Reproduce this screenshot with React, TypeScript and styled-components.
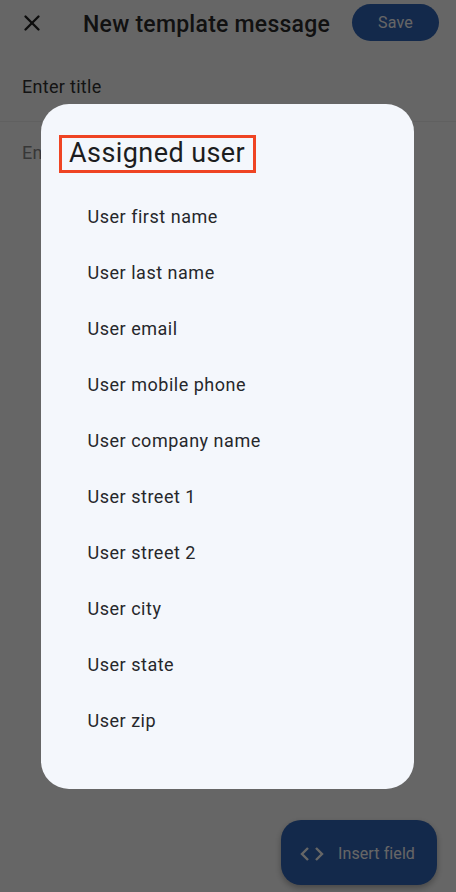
import React from 'react';
import styled, { createGlobalStyle } from 'styled-components';
import { X } from 'lucide-react';

const GlobalStyle = createGlobalStyle`
  html, body {
    margin: 0;
    padding: 0;
    background: #fff;
  }
  * {
    box-sizing: border-box;
  }
`;

const Page = styled.div`
  position: relative;
  width: 456px;
  height: 892px;
  overflow: hidden;
  background: #fff;
  font-family: Roboto, "Liberation Sans", sans-serif;
`;

const Header = styled.header`
  display: flex;
  align-items: center;
  height: 46px;
  padding: 0 17px 0 19px;
`;

const CloseButton = styled.div`
  display: flex;
  width: 26px;
  height: 26px;
  color: #222;
`;

const HeaderTitle = styled.h1`
  flex: 1;
  margin: 2px 0 0 38px;
  font-size: 23px;
  font-weight: 500;
  letter-spacing: 0.25px;
  color: #2c2c2c;
`;

const SaveButton = styled.button`
  width: 87px;
  height: 37px;
  margin-bottom: 2px;
  border: none;
  border-radius: 19px;
  background: #3066bb;
  color: #fff;
  font: 400 16px Roboto, sans-serif;
  letter-spacing: 0.2px;
`;

const TitleField = styled.div`
  height: 76px;
  padding: 30px 22px 0;
  border-bottom: 1px solid #f0f0f0;
  font-size: 18px;
  letter-spacing: 0.3px;
  line-height: 22px;
  color: #333;
`;

const BodyField = styled.div`
  padding: 20px 22px 0;
  font-size: 18px;
  letter-spacing: 0.3px;
  line-height: 22px;
  color: #8a8a8a;
`;

const InsertButton = styled.button`
  position: absolute;
  right: 19px;
  bottom: 7px;
  display: flex;
  align-items: center;
  gap: 14px;
  width: 156px;
  height: 65px;
  padding: 2px 0 0 19px;
  border: none;
  border-radius: 20px;
  background: #3066bb;
  color: #fff;
  font: 400 16px Roboto, sans-serif;
  letter-spacing: 0.1px;
  box-shadow: 0 3px 6px rgba(0, 0, 0, 0.3);
`;

const Scrim = styled.div`
  position: absolute;
  inset: 0;
  display: flex;
  align-items: center;
  justify-content: center;
  background: rgba(0, 0, 0, 0.6);
`;

const Dialog = styled.div`
  width: 373px;
  height: 685px;
  margin: 1px 0 0 -1px;
  padding: 31px 18px 0;
  border-radius: 28px;
  background: #f4f7fc;
`;

const DialogTitle = styled.h2`
  display: inline-block;
  width: 197px;
  height: 38px;
  margin: 0;
  padding-left: 7px;
  border: 3px solid #ef4423;
  font-size: 27px;
  font-weight: 400;
  line-height: 30px;
  letter-spacing: 0.42px;
  color: #1c1d20;
`;

const FieldList = styled.ul`
  list-style: none;
  margin: 15px 0 0;
  padding: 0 0 0 28.5px;
`;

const FieldItem = styled.li`
  display: flex;
  align-items: center;
  height: 56px;
  font-size: 18px;
  letter-spacing: 0.52px;
  color: #26272b;
`;

const fields = [
  'User first name',
  'User last name',
  'User email',
  'User mobile phone',
  'User company name',
  'User street 1',
  'User street 2',
  'User city',
  'User state',
  'User zip',
];

const App: React.FC = () => {
  return (
    <Page>
      <GlobalStyle />
      <Header>
        <CloseButton>
          <X size={26} strokeWidth={2.2} />
        </CloseButton>
        <HeaderTitle>New template message</HeaderTitle>
        <SaveButton>Save</SaveButton>
      </Header>
      <TitleField>Enter title</TitleField>
      <BodyField>Enter message</BodyField>
      <InsertButton>
        <svg width="24" height="16" viewBox="0 0 24 16" fill="none" stroke="currentColor" strokeWidth="2.4">
          <path d="M8 2 2 8l6 6" />
          <path d="M16 2l6 6-6 6" />
        </svg>
        Insert field
      </InsertButton>
      <Scrim>
        <Dialog>
          <DialogTitle>Assigned user</DialogTitle>
          <FieldList>
            {fields.map((field) => (
              <FieldItem key={field}>{field}</FieldItem>
            ))}
          </FieldList>
        </Dialog>
      </Scrim>
    </Page>
  );
};

export default App;
